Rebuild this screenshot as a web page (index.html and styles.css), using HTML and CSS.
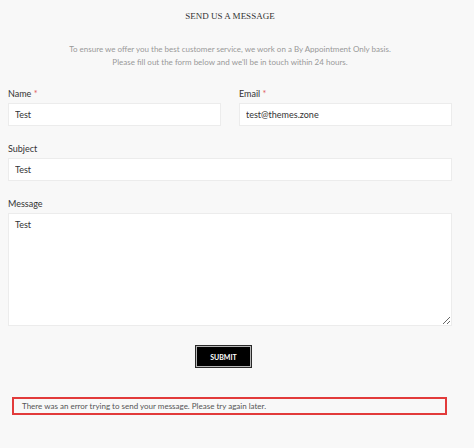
FILE: index.html
```html
<!DOCTYPE html>
<html>
<head>
<meta charset="utf-8">
<link rel="stylesheet" href="styles.css">
</head>
<body>
<div class="page">
  <h2 class="title">SEND US A MESSAGE</h2>
  <p class="intro">To ensure we offer you the best customer service, we work on a By Appointment Only basis.<br>Please fill out the form below and we'll be in touch within 24 hours.</p>
  <form class="form">
    <div class="row">
      <div class="field">
        <label class="label">Name <span class="req">*</span></label>
        <input class="input" type="text" value="Test">
      </div>
      <div class="field">
        <label class="label">Email <span class="req">*</span></label>
        <input class="input" type="text" value="test@themes.zone">
      </div>
    </div>
    <div class="field">
      <label class="label">Subject</label>
      <input class="input" type="text" value="Test">
    </div>
    <div class="field">
      <label class="label">Message</label>
      <textarea class="textarea">Test</textarea>
    </div>
    <div class="actions">
      <button class="submit" type="button">SUBMIT</button>
    </div>
    <div class="error">There was an error trying to send your message. Please try again later.</div>
  </form>
</div>
</body>
</html>
```
FILE: styles.css
```css
html, body {
  margin: 0;
  padding: 0;
  background: #f8f8f8;
}
.page {
  padding: 9px 22px 0 8px;
  font-family: Lato, "Liberation Sans", sans-serif;
  color: #333;
}
.title {
  margin: 0;
  text-align: center;
  font-family: "Liberation Serif", serif;
  font-weight: normal;
  font-size: 9px;
  line-height: 14px;
  color: #333;
}
.intro {
  margin: 20px 0 0 0;
  text-align: center;
  font-size: 8px;
  line-height: 13px;
  font-weight: 400;
  color: #999;
}
.form {
  margin-top: 19px;
  display: flex;
  flex-direction: column;
}
.row {
  display: flex;
  gap: 18px;
}
.row .field {
  flex: 1;
}
.field {
  display: flex;
  flex-direction: column;
  margin-bottom: 17px;
}
.label {
  font-size: 9px;
  line-height: 12px;
  color: #333;
  margin-bottom: 3px;
}
.req {
  color: #e05a5a;
}
.input {
  box-sizing: border-box;
  height: 23px;
  margin: 0;
  border: 1px solid #ececec;
  background: #fff;
  padding: 0 6px;
  font-family: Lato, "Liberation Sans", sans-serif;
  font-size: 9px;
  color: #333;
  outline: none;
}
.textarea {
  box-sizing: border-box;
  height: 113px;
  margin: 0;
  border: 1px solid #ececec;
  background: #fff;
  padding: 5px 6px;
  font-family: Lato, "Liberation Sans", sans-serif;
  font-size: 9px;
  color: #333;
  outline: none;
}
.actions {
  display: flex;
  justify-content: center;
  margin-top: 2px;
}
.submit {
  width: 57px;
  height: 23px;
  margin-right: 13px;
  background: #000;
  border: 1px solid #2a2a2a;
  box-shadow: inset 0 0 0 1px #b5b5b5;
  color: #fff;
  font-family: Lato, "Liberation Sans", sans-serif;
  font-weight: bold;
  font-size: 7px;
  padding: 0;
}
.error {
  margin: 29px 5px 0 4px;
  box-sizing: border-box;
  height: 18px;
  border: 2px solid #e23b3b;
  padding: 0 8px;
  font-size: 8px;
  line-height: 14px;
  color: #555;
}
```
